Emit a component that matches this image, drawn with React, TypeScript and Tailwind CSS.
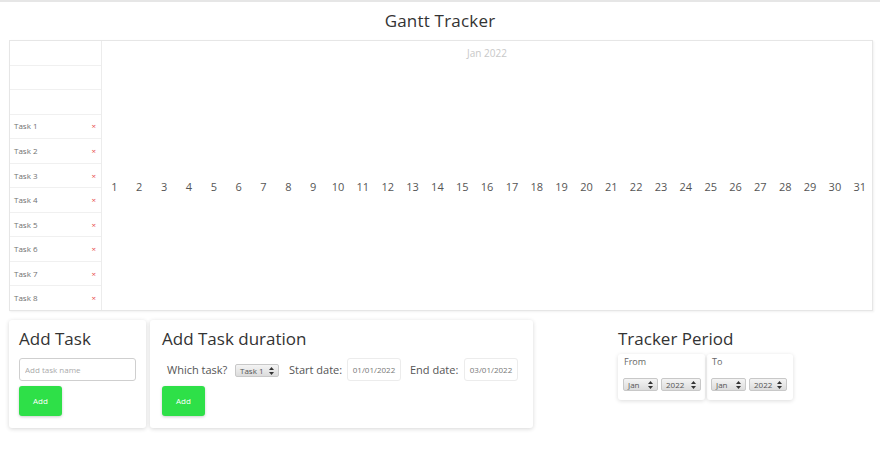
import React, { useState } from 'react';

const font = { fontFamily: '"Open Sans", "DejaVu Sans", sans-serif' };

const tasks = ['Task 1', 'Task 2', 'Task 3', 'Task 4', 'Task 5', 'Task 6', 'Task 7', 'Task 8'];
const days = Array.from({ length: 31 }, (_, i) => i + 1);

function MiniSelect({ value, width }: { value: string; width: string }) {
    return (
        <div className={`${width} shrink-0 h-[13px] flex items-center justify-between px-[4px] rounded-[2px] border border-[#c8c8c8] bg-gradient-to-b from-[#f4f4f4] to-[#dcdcdc] text-[8px] text-[#555]`}>
            <span>{value}</span>
            <svg width="5" height="8" viewBox="0 0 5 8">
                <path d="M2.5 0 L5 3 L0 3 Z" fill="#333" />
                <path d="M2.5 8 L5 5 L0 5 Z" fill="#333" />
            </svg>
        </div>
    );
}

const App: React.FC = () => {
    const [taskName, setTaskName] = useState('');

    return (
        <div className="w-[880px] h-[456px] bg-white border-t-2 border-[#e6e6e6] overflow-hidden" style={font}>
            {/* Header */}
            <div className="h-[38px] flex items-center justify-center">
                <h1 className="text-[17px] text-[#333] tracking-[0.2px]">Gantt Tracker</h1>
            </div>

            {/* Chart */}
            <div className="mx-[9px] w-[864px] h-[271px] border border-[#e6e6e6] flex shadow-[1px_1px_2px_rgba(0,0,0,0.06)]">
                <div className="w-[92px] border-r border-[#ececec] flex flex-col">
                    <div className="flex-1 border-b border-[#f0f0f0]" />
                    <div className="flex-1 border-b border-[#f0f0f0]" />
                    <div className="flex-1 border-b border-[#f0f0f0]" />
                    {tasks.map((t, i) => (
                        <div
                            key={t}
                            className={`flex-1 flex items-center justify-between pl-[4px] pr-[5px] text-[8px] text-[#707070] ${i < tasks.length - 1 ? 'border-b border-[#f0f0f0]' : ''}`}
                        >
                            <span>{t}</span>
                            <span className="text-[#e84a4a] text-[8px] leading-none">×</span>
                        </div>
                    ))}
                </div>
                <div className="flex-1 flex flex-col">
                    <div className="h-[24px] flex items-center justify-center text-[10px] text-[#c8c8c8]">Jan 2022</div>
                    <div className="flex-1 flex items-center">
                        {days.map((d) => (
                            <div key={d} className="flex-1 text-center text-[11px] text-[#555]">{d}</div>
                        ))}
                    </div>
                </div>
            </div>

            {/* Bottom controls */}
            <div className="flex mt-[9px] px-[9px]">
                <div className="w-[137px] h-[108px] rounded-[3px] shadow-[0_1px_4px_rgba(0,0,0,0.16)] px-[10px] pt-[8px]">
                    <h2 className="text-[17px] text-[#333] leading-[22px]">Add Task</h2>
                    <input
                        value={taskName}
                        onChange={(e) => setTaskName(e.target.value)}
                        placeholder="Add task name"
                        className="mt-[8px] w-[117px] h-[23px] px-[5px] border border-[#cfcfcf] rounded-[3px] text-[8px] text-[#333] placeholder:text-[#aaa] outline-none"
                    />
                    <button className="mt-[5px] w-[43px] h-[30px] rounded-[3px] bg-[#2ee048] text-white text-[8px] shadow-[0_1px_3px_rgba(0,0,0,0.2)]">
                        Add
                    </button>
                </div>

                <div className="ml-[4px] w-[383px] h-[108px] rounded-[3px] shadow-[0_1px_4px_rgba(0,0,0,0.16)] px-[12px] pt-[8px]">
                    <h2 className="text-[17px] text-[#333] leading-[22px]">Add Task duration</h2>
                    <div className="mt-[8px] h-[23px] flex items-center pl-[5px] text-[11px] text-[#555] whitespace-nowrap">
                        <span className="w-[59px] shrink-0 pt-[2px]">Which task?</span>
                        <div className="ml-[9px] pt-[2px]">
                            <MiniSelect value="Task 1" width="w-[44px]" />
                        </div>
                        <span className="ml-[10px] w-[49px] shrink-0 pt-[2px]">Start date:</span>
                        <div className="ml-[9px] w-[54px] shrink-0 h-[23px] flex items-center justify-center border border-[#ececec] rounded-[3px] text-[8px] text-[#777]">01/01/2022</div>
                        <span className="ml-[9px] w-[45px] shrink-0 pt-[2px]">End date:</span>
                        <div className="ml-[9px] w-[54px] shrink-0 h-[23px] flex items-center justify-center border border-[#ececec] rounded-[3px] text-[8px] text-[#777]">03/01/2022</div>
                    </div>
                    <button className="mt-[5px] w-[43px] h-[30px] rounded-[3px] bg-[#2ee048] text-white text-[8px] shadow-[0_1px_3px_rgba(0,0,0,0.2)]">
                        Add
                    </button>
                </div>

                <div className="ml-[85px] pt-[8px]">
                    <h2 className="text-[17px] text-[#333] leading-[22px]">Tracker Period</h2>
                    <div className="mt-[4px] flex gap-[2px]">
                        <div className="w-[87px] h-[46px] rounded-[3px] shadow-[0_1px_4px_rgba(0,0,0,0.14)] px-[5px] pt-[2px]">
                            <div className="text-[9px] text-[#666] pl-[1px] leading-[12px]">From</div>
                            <div className="mt-[10px] flex gap-[3px]">
                                <MiniSelect value="Jan" width="w-[35px]" />
                                <MiniSelect value="2022" width="w-[40px]" />
                            </div>
                        </div>
                        <div className="w-[86px] h-[46px] rounded-[3px] shadow-[0_1px_4px_rgba(0,0,0,0.14)] px-[4px] pt-[2px]">
                            <div className="text-[9px] text-[#666] pl-[1px] leading-[12px]">To</div>
                            <div className="mt-[10px] flex gap-[3px]">
                                <MiniSelect value="Jan" width="w-[35px]" />
                                <MiniSelect value="2022" width="w-[38px]" />
                            </div>
                        </div>
                    </div>
                </div>
            </div>
        </div>
    );
};

export default App;
